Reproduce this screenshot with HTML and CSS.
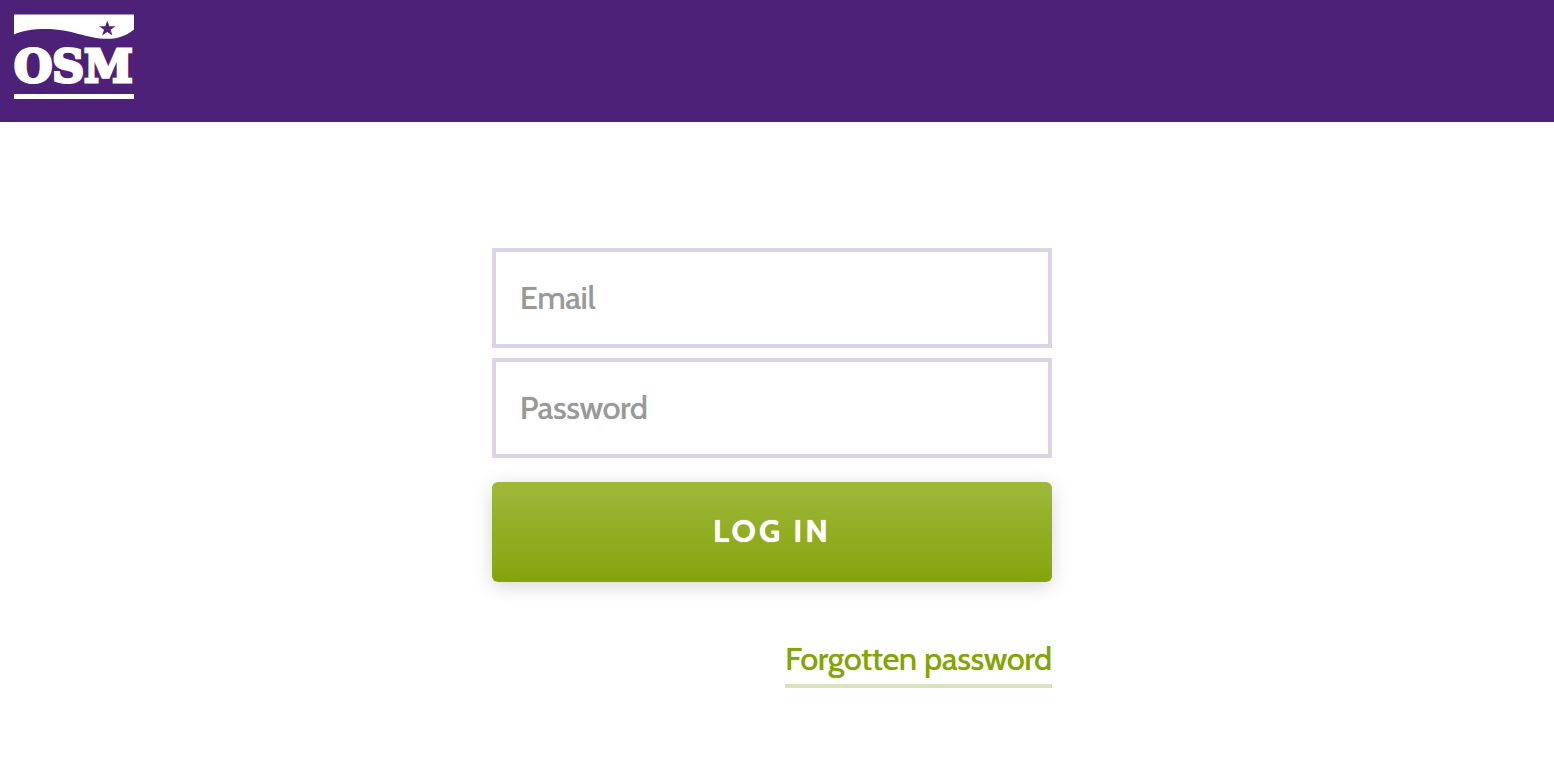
FILE: index.html
```html
<!DOCTYPE html>
<html lang="en">
<head>
    <meta charset="UTF-8">
    <meta name="viewport" content="width=device-width, initial-scale=1.0">
    <title>OSM - Log in</title>
    <link rel="stylesheet" href="styles.css">
</head>
<body>
    <header class="header">
        <a class="logo" href="#" aria-label="OSM">
            <svg width="120" height="86" viewBox="0 0 120 86" fill="#fff">
                <path d="M0 0.5H120V15.5C112 22 104 24.8 94 24.8C72 24.8 58 15 32 15C18 15 7 17 0 20.5Z"/>
                <path class="logo-star" d="M93.300 6.500L95.300 12.200H101.500L96.600 15.800L98.400 21.500L93.300 18.100L88.200 21.500L90 15.800L85.100 12.200H91.300Z"/>
                <text class="logo-text" x="0" y="68">OSM</text>
                <rect x="0" y="80" width="120" height="5"/>
            </svg>
        </a>
    </header>

    <main class="main">
        <form class="login-form">
            <input type="email" id="email" placeholder="Email" aria-label="Email">
            <input type="password" id="password" placeholder="Password" aria-label="Password">
            <button type="submit">LOG IN</button>
            <a class="forgotten" href="#">Forgotten password</a>
        </form>
    </main>
</body>
</html>
```
FILE: styles.css
```css
:root {
    --purple: #4d2177;
    --green: #84a40b;
    --green-light: #9eb83b;
    --field-border: #dcd3e6;
    --placeholder: #999999;
}

* {
    box-sizing: border-box;
}

body {
    font-family: Cabin, Lato, sans-serif;
    font-size: 32px;
    background: #ffffff;
    margin: 0;
}

.header {
    background: var(--purple);
    padding: 14px 14px 22px;
}

.logo,
.logo svg {
    display: block;
}

.logo {
    width: 120px;
}

.logo-star {
    fill: var(--purple);
}

.logo-text {
    font-family: "DejaVu Serif", serif;
    font-size: 44px;
    font-weight: bold;
    stroke: #ffffff;
    stroke-width: 3px;
}

.main {
    display: flex;
    justify-content: center;
    padding: 126px 10px 70px 0;
}

.login-form {
    display: flex;
    flex-direction: column;
    width: 100%;
    max-width: 560px;
}

input {
    height: 100px;
    margin-bottom: 10px;
    padding: 0 24px 2px;
    border: 4px solid var(--field-border);
    border-radius: 0;
    font: inherit;
}

input::placeholder {
    color: var(--placeholder);
    opacity: 1;
}

/* slightly heavier strokes without changing the text width */
input::placeholder,
button,
.forgotten {
    text-shadow: 0 0 1px currentColor;
}

button {
    height: 100px;
    margin-top: 14px;
    padding: 0 0 4px;
    border: none;
    border-radius: 6px;
    background: linear-gradient(var(--green-light), var(--green));
    box-shadow: 0 4px 20px rgba(0, 0, 0, 0.16);
    color: #ffffff;
    font: inherit;
    font-weight: bold;
    letter-spacing: 3px;
    cursor: pointer;
}

.forgotten {
    align-self: flex-end;
    margin-top: 56px;
    padding-bottom: 4px;
    border-bottom: 4px solid #dae3bd;
    color: var(--green);
    line-height: 42px;
    text-decoration: none;
}
```
